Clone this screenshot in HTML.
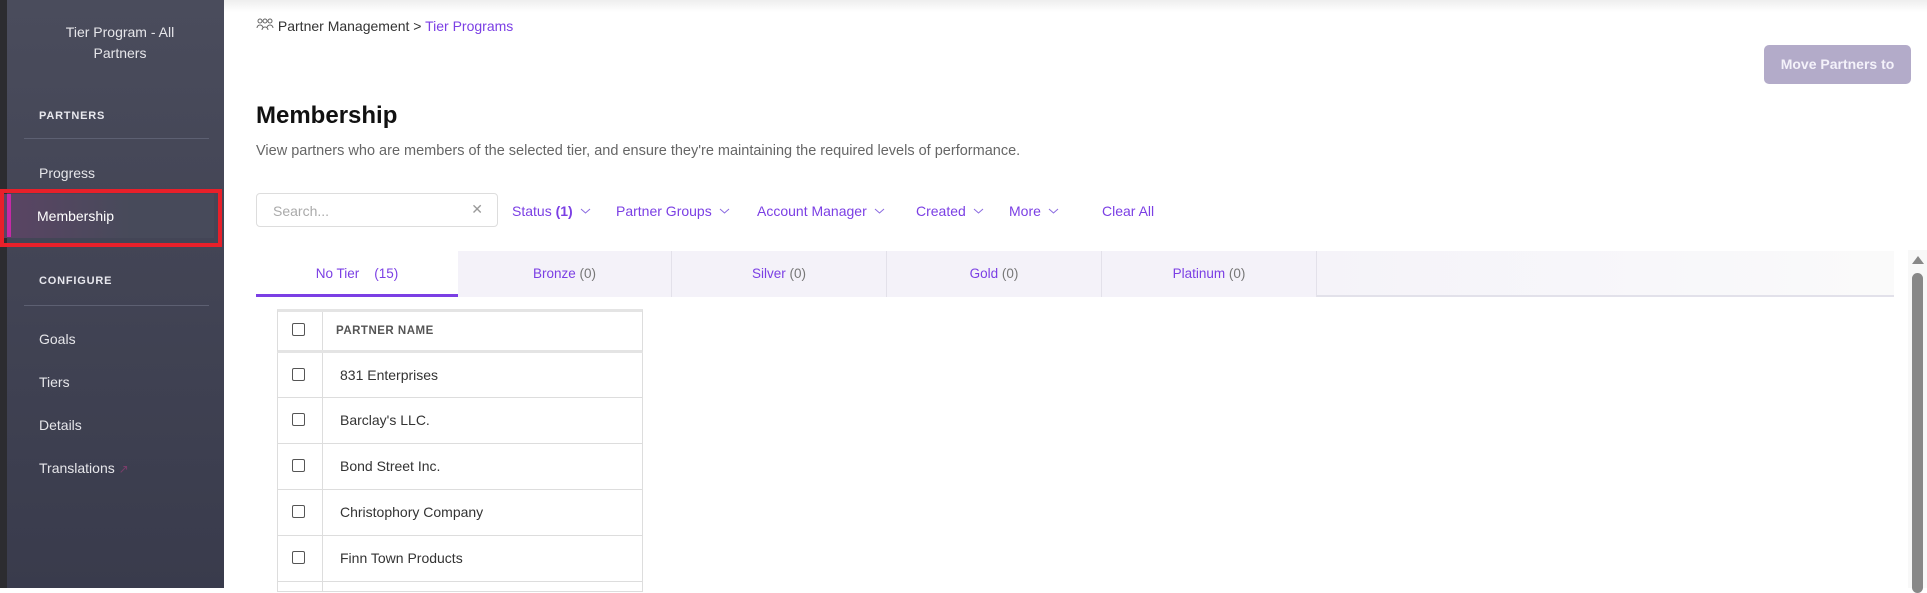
<!DOCTYPE html>
<html><head><meta charset="utf-8"><style>
*{box-sizing:border-box;margin:0;padding:0}
body{width:1927px;height:588px;overflow:hidden;font-family:"Liberation Sans",sans-serif;background:#fff;position:relative}
.sb{position:absolute;left:0;top:0;width:224px;height:588px;background:linear-gradient(#4a4c5c,#393b4c)}
.strip{position:absolute;left:0;top:0;width:7px;height:588px;background:#2c2c30}
.t{position:absolute;color:#e6e6ea;font-size:14px}
.h{position:absolute;color:#e8e8ee;font-size:11px;font-weight:bold;letter-spacing:.8px}
.ln{position:absolute;left:24px;width:185px;height:1px;background:#5d6072}
.m{position:absolute;font-size:14px}
.p{color:#7b3fe4}
.f{position:absolute;top:203px;font-size:14px;color:#7b3fe4}
.f svg{margin-left:7px;vertical-align:2px}
.tab{position:absolute;top:251px;height:46px;background:#f4f2f9;border-right:1px solid #e3e1ea;font-size:13.5px;color:#7b3fe4;text-align:center;line-height:46px}
.tab b{font-weight:normal;color:#777}
.row{position:absolute;left:277px;width:366px;border:1px solid #ddd;border-top:none;font-size:14px;color:#333}
.cb{position:absolute;left:14px;width:13px;height:13px;border:1px solid #555;border-radius:2px}
.vl{position:absolute;left:44px;top:0;bottom:0;width:1px;background:#ddd}
</style></head><body>
<div class="sb"></div><div class="strip"></div>
<div class="t" style="left:55px;width:130px;text-align:center;top:22px;line-height:21px;font-size:14px">Tier Program - All Partners</div>
<div class="h" style="left:39px;top:110px">PARTNERS</div>
<div class="ln" style="top:138px"></div>
<div class="t" style="left:39px;top:165px">Progress</div>
<div style="position:absolute;left:4px;top:194px;width:210px;height:44px;background:linear-gradient(90deg,#5b4464,#474a5a 60%)"></div>
<div style="position:absolute;left:7px;top:194px;width:4px;height:43px;background:#c52aa6"></div>
<div style="position:absolute;left:0;top:189px;width:222px;height:58px;border:4px solid #e8202a"></div>
<div class="t" style="left:37px;top:208px;color:#fff">Membership</div>
<div class="h" style="left:39px;top:275px">CONFIGURE</div>
<div class="ln" style="top:305px"></div>
<div class="t" style="left:39px;top:331px">Goals</div>
<div class="t" style="left:39px;top:374px">Tiers</div>
<div class="t" style="left:39px;top:417px">Details</div>
<div class="t" style="left:39px;top:460px">Translations <span style="color:#7a3d6a;font-size:12px">↗</span></div>
<div style="position:absolute;left:224px;top:0;width:1703px;height:12px;background:linear-gradient(#eee,#fff)"></div>
<div class="m" style="left:256px;top:18px;color:#333"><svg width="18" height="14" viewBox="0 0 18 14" style="vertical-align:-1px" fill="none" stroke="#666" stroke-width="1"><circle cx="4" cy="3" r="2"/><circle cx="9" cy="3" r="2"/><circle cx="14" cy="3" r="2"/><path d="M1 10a3 3 0 0 1 6 0M6 12a3 3 0 0 1 6 0M11 10a3 3 0 0 1 6 0"/></svg> Partner Management &gt; <span class="p">Tier Programs</span></div>
<div style="position:absolute;left:1764px;top:45px;width:147px;height:39px;background:#b3abc9;border-radius:5px;color:#f4f2fa;font-weight:bold;font-size:14px;text-align:center;line-height:39px">Move Partners to</div>
<div style="position:absolute;left:256px;top:102px;font-size:24px;font-weight:bold;color:#111">Membership</div>
<div class="m" style="left:256px;top:143px;color:#666;font-size:14.5px">View partners who are members of the selected tier, and ensure they're maintaining the required levels of performance.</div>
<div style="position:absolute;left:256px;top:193px;width:242px;height:34px;border:1px solid #ddd;border-radius:4px;font-size:14px;color:#aaa;padding:9px 16px">Search...<span style="position:absolute;right:14px;top:7px;color:#999">✕</span></div>
<div class="f" style="left:512px">Status <b>(1)</b><svg width="11" height="6" viewBox="0 0 11 6"><path d="M1 1l4.5 4 4.5-4" fill="none" stroke="#8a6ae0"/></svg></div>
<div class="f" style="left:616px">Partner Groups<svg width="11" height="6" viewBox="0 0 11 6"><path d="M1 1l4.5 4 4.5-4" fill="none" stroke="#8a6ae0"/></svg></div>
<div class="f" style="left:757px">Account Manager<svg width="11" height="6" viewBox="0 0 11 6"><path d="M1 1l4.5 4 4.5-4" fill="none" stroke="#8a6ae0"/></svg></div>
<div class="f" style="left:916px">Created<svg width="11" height="6" viewBox="0 0 11 6"><path d="M1 1l4.5 4 4.5-4" fill="none" stroke="#8a6ae0"/></svg></div>
<div class="f" style="left:1009px">More<svg width="11" height="6" viewBox="0 0 11 6"><path d="M1 1l4.5 4 4.5-4" fill="none" stroke="#8a6ae0"/></svg></div>
<div class="f" style="left:1102px">Clear All</div>
<div style="position:absolute;left:256px;top:251px;width:1638px;height:46px;background:linear-gradient(90deg,#f4f2f9,#f4f2f9 60%,#fafafa);border-bottom:2px solid #e2e1ea"></div>
<div class="tab" style="left:256px;width:202px;background:#fff;border-bottom:3px solid #7b3fe4;border-right:none">No Tier &nbsp;&nbsp; (15)</div>
<div class="tab" style="left:458px;width:214px">Bronze <b>(0)</b></div>
<div class="tab" style="left:672px;width:215px">Silver <b>(0)</b></div>
<div class="tab" style="left:887px;width:215px">Gold <b>(0)</b></div>
<div class="tab" style="left:1102px;width:215px">Platinum <b>(0)</b></div>
<div class="row" style="top:309px;height:44px;border-top:3px solid #e4e4e4;border-bottom:3px solid #e4e4e4"><div class="cb" style="top:11px"></div><div class="vl"></div><span style="position:absolute;left:58px;top:13px;font-size:11.5px;font-weight:bold;color:#555;letter-spacing:.5px">PARTNER NAME</span></div>
<div class="row" style="top:353px;height:45px"><div class="cb" style="top:15px"></div><div class="vl"></div><span style="position:absolute;left:62px;top:14px">831 Enterprises</span></div>
<div class="row" style="top:398px;height:46px"><div class="cb" style="top:15px"></div><div class="vl"></div><span style="position:absolute;left:62px;top:14px">Barclay's LLC.</span></div>
<div class="row" style="top:444px;height:46px"><div class="cb" style="top:15px"></div><div class="vl"></div><span style="position:absolute;left:62px;top:14px">Bond Street Inc.</span></div>
<div class="row" style="top:490px;height:46px"><div class="cb" style="top:15px"></div><div class="vl"></div><span style="position:absolute;left:62px;top:14px">Christophory Company</span></div>
<div class="row" style="top:536px;height:46px"><div class="cb" style="top:15px"></div><div class="vl"></div><span style="position:absolute;left:62px;top:14px">Finn Town Products</span></div>
<div class="row" style="top:582px;height:10px"><div class="vl"></div></div>
<div style="position:absolute;left:1908px;top:250px;width:19px;height:338px;background:#f8f8f8"></div>
<div style="position:absolute;left:1912px;top:256px;width:0;height:0;border-left:6px solid transparent;border-right:6px solid transparent;border-bottom:8px solid #888"></div>
<div style="position:absolute;left:1912px;top:273px;width:11px;height:320px;background:#888;border-radius:6px"></div>
</body></html>
